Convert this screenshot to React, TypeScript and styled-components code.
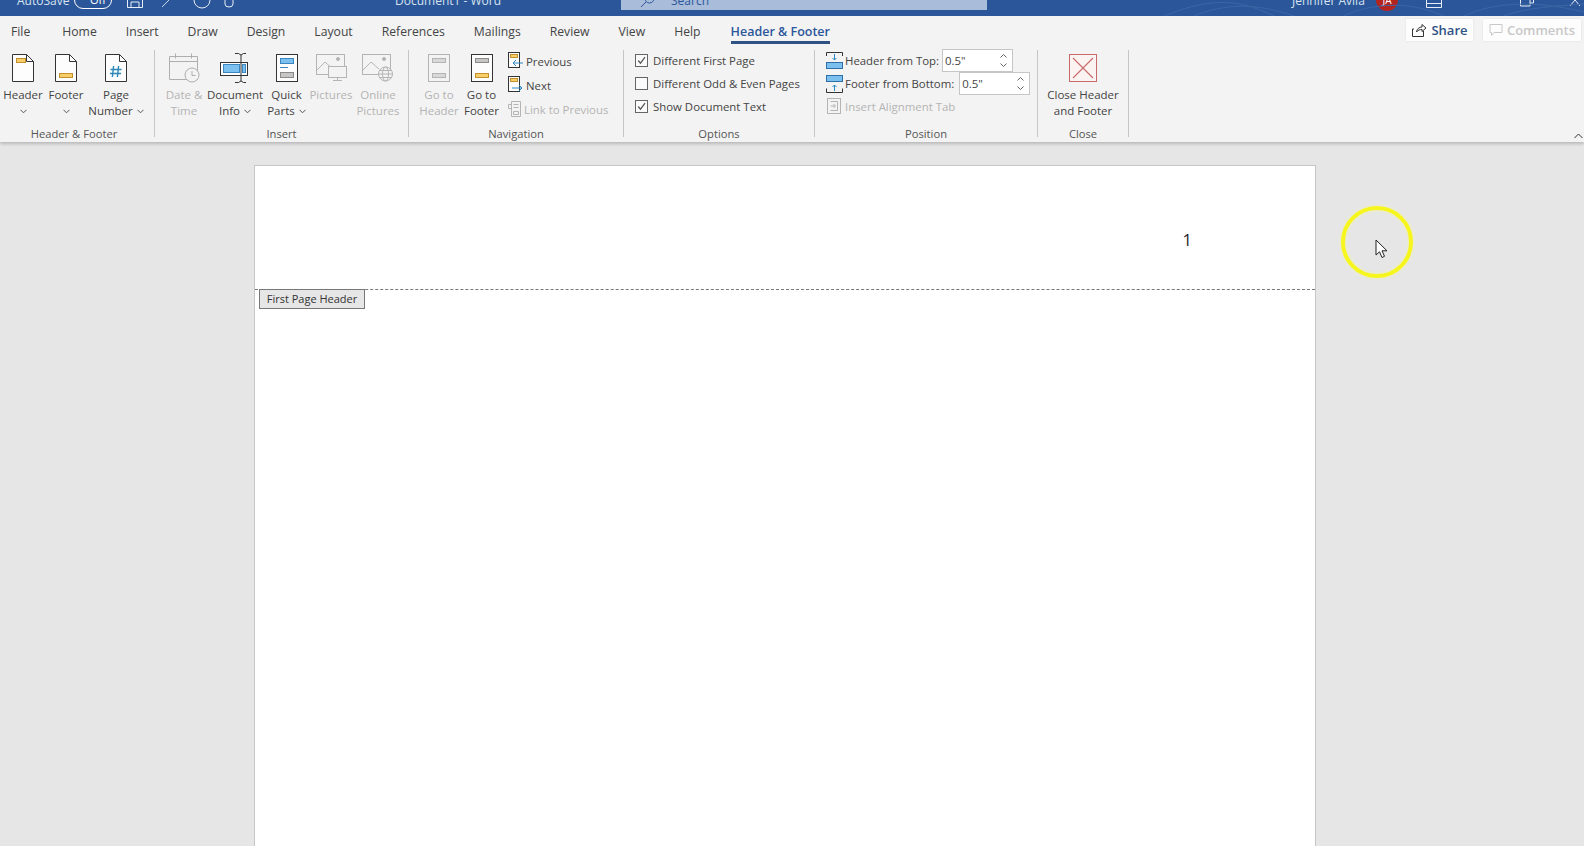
import React from "react";
import styled, { createGlobalStyle } from "styled-components";

const Global = createGlobalStyle`
  html, body { margin: 0; padding: 0; height: 100%; background: #e6e6e6; }
  body { font-family: "Open Sans", "Noto Sans", "Liberation Sans", sans-serif; overflow: hidden; }
  #root { height: 846px; }
  * { box-sizing: border-box; }
`;

const Shell = styled.div`
  position: relative;
  width: 1584px;
  height: 846px;
  overflow: hidden;
  display: flex;
  flex-direction: column;
  background: #e6e6e6;
`;

const TitleBar = styled.header`
  position: relative;
  height: 16px;
  flex: none;
  overflow: hidden;
  background: #2b579a;
`;
const TitleRow = styled.div`
  display: flex;
  align-items: center;
  height: 32px;
  margin-top: -16px;
  padding-left: 17px;
  color: #dfe7f3;
  font-size: 12px;
`;
const TitleText = styled.span<{ $ml?: number; $w: number }>`
  flex: none;
  width: ${(p) => p.$w}px;
  margin-left: ${(p) => p.$ml ?? 0}px;
  white-space: nowrap;
  color: #d8e2f0;
`;
const Slot = styled.span<{ $ml: number; $w: number }>`
  flex: none;
  display: flex;
  width: ${(p) => p.$w}px;
  margin-left: ${(p) => p.$ml}px;
`;
const Toggle = styled.span`
  flex: none;
  width: 38px;
  height: 18px;
  margin-left: 8px;
  border: 1.5px solid #fff;
  border-radius: 9px;
  color: #fff;
  font-size: 11px;
  line-height: 15px;
  text-align: right;
  padding-right: 5px;
`;
const SearchBox = styled.div`
  flex: none;
  width: 366px;
  height: 20px;
  margin-left: 118px;
  background: #a9bcd9;
  color: #2b579a;
  display: flex;
  align-items: center;
  padding-left: 19px;
  gap: 16px;
  font-size: 12px;
`;
const Avatar = styled.span`
  flex: none;
  width: 22px;
  height: 22px;
  margin-left: 13px;
  border-radius: 50%;
  background: #b5231f;
  color: #fff;
  font-size: 10px;
  line-height: 22px;
  text-align: center;
`;
const WaveArt = styled.svg`
  position: absolute;
  right: 0;
  top: 0;
`;

const TabRow = styled.nav`
  position: relative;
  z-index: 2;
  flex: none;
  height: 30px;
  display: flex;
  align-items: stretch;
  background: #f3f3f3;
  padding-left: 11px;
  gap: 29px;
`;
const Tab = styled.span<{ $active?: boolean; $extra?: number }>`
  position: relative;
  display: flex;
  align-items: center;
  margin-left: ${(p) => p.$extra ?? 0}px;
  font-size: ${(p) => (p.$active ? 12.5 : 12.2)}px;
  white-space: nowrap;
  color: ${(p) => (p.$active ? "#2b579a" : "#444")};
  font-weight: ${(p) => (p.$active ? 600 : 400)};
  &::after {
    content: "";
    display: ${(p) => (p.$active ? "block" : "none")};
    position: absolute;
    left: 0;
    right: 0;
    bottom: 2px;
    height: 3px;
    background: #2f5285;
  }
`;
const TabActions = styled.div`
  margin-left: auto;
  display: flex;
  align-items: center;
  gap: 10px;
  padding-right: 3px;
  padding-bottom: 2px;
`;
const ActionButton = styled.span<{ $w: number; $muted?: boolean }>`
  width: ${(p) => p.$w}px;
  height: 22px;
  display: flex;
  align-items: center;
  justify-content: center;
  gap: 4px;
  background: #fdfdfd;
  box-shadow: 0 0 2px #ddd;
  font-size: 13px;
  font-weight: 600;
  color: ${(p) => (p.$muted ? "#c8c8c8" : "#2f5285")};
`;

const Ribbon = styled.section`
  position: relative;
  flex: none;
  height: 96px;
  display: flex;
  background: #f3f3f3;
  box-shadow: 0 2px 3px rgba(0, 0, 0, 0.2);
  z-index: 1;
`;
const Group = styled.div<{ $w: number }>`
  flex: none;
  width: ${(p) => p.$w}px;
  display: flex;
  flex-direction: column;
`;
const GroupBody = styled.div<{ $pl?: number }>`
  flex: none;
  height: 80px;
  display: flex;
  padding-top: 4px;
  padding-left: ${(p) => p.$pl ?? 0}px;
`;
const GroupLabel = styled.div<{ $pr?: number }>`
  height: 16px;
  line-height: 16px;
  font-size: 11.2px;
  text-align: center;
  color: #555;
  padding-right: ${(p) => p.$pr ?? 0}px;
`;
const Divider = styled.div`
  flex: none;
  width: 1px;
  height: 87px;
  margin-top: 4px;
  background: #c6c6c6;
`;
const Large = styled.div<{ $w: number; $off?: boolean }>`
  flex: none;
  width: ${(p) => p.$w}px;
  display: flex;
  flex-direction: column;
  align-items: center;
  color: ${(p) => (p.$off ? "#b4b4b4" : "#444")};
  font-size: 11.5px;
  line-height: 16px;
  white-space: nowrap;
`;
const IconSlot = styled.div`
  height: 36px;
  margin-bottom: 1px;
  display: flex;
  align-items: center;
  justify-content: center;
`;
const LineRow = styled.div`
  height: 16px;
  display: flex;
  align-items: center;
  gap: 4px;
`;
const SmallCol = styled.div<{ $ml?: number }>`
  margin-left: ${(p) => p.$ml ?? 0}px;
  margin-top: -1px;
  display: flex;
  flex-direction: column;
`;
const SmallRow = styled.div<{ $off?: boolean; $h?: number }>`
  height: ${(p) => p.$h ?? 24}px;
  display: flex;
  align-items: center;
  gap: 2px;
  font-size: 11.4px;
  white-space: nowrap;
  color: ${(p) => (p.$off ? "#b4b4b4" : "#444")};
`;
const Check = styled.span`
  flex: none;
  width: 13px;
  height: 13px;
  margin-right: 3px;
  border: 1px solid #666;
  background: #fbfbfb;
  display: flex;
`;
const SpinInput = styled.div<{ $ml: number }>`
  flex: none;
  width: 71px;
  height: 23px;
  margin-left: ${(p) => p.$ml}px;
  display: flex;
  align-items: center;
  justify-content: space-between;
  border: 1px solid #c6c6c6;
  background: #fff;
  padding-left: 2px;
  color: #444;
`;
const SpinArrows = styled.span`
  width: 17px;
  display: flex;
  flex-direction: column;
  align-items: center;
  gap: 5px;
`;
const Collapse = styled.svg`
  position: absolute;
  right: 1px;
  bottom: 3px;
`;

const Workspace = styled.main`
  flex: 1;
  min-height: 0;
  padding: 23px 0 0 254px;
`;
const Page = styled.article`
  position: relative;
  width: 1062px;
  height: 700px;
  background: #fff;
  border: 1px solid #c6c6c6;
`;
const HeaderArea = styled.div`
  height: 124px;
  border-bottom: 1px dashed #777;
  padding: 63px 123px 0 0;
  text-align: right;
  font-size: 16.5px;
  line-height: 22px;
  color: #222;
`;
const HeaderTag = styled.span`
  position: absolute;
  left: 4px;
  top: 123px;
  width: 106px;
  height: 20px;
  border: 1px solid #777;
  background: #e6e6e6;
  color: #333;
  font-size: 11px;
  line-height: 18px;
  text-align: center;
  white-space: nowrap;
`;
const Spotlight = styled.div`
  position: absolute;
  left: 1341px;
  top: 206px;
  width: 72px;
  height: 72px;
  border: 4px solid #f6f61e;
  border-radius: 50%;
  box-shadow: 0 0 3px #f6f6a0, inset 0 0 3px #f6f6a0;
`;
const Pointer = styled.svg`
  position: absolute;
  left: 1375px;
  top: 239px;
`;

const Chev = () => (
  <svg width="7" height="5" viewBox="0 0 7 5"><path d="M.5 .8 3.5 3.8 6.5 .8" fill="none" stroke="#555" strokeWidth="1" /></svg>
);

const Doc = ({ children, c = "#333", fill = "#fdfdfd" }: { children?: React.ReactNode; c?: string; fill?: string }) => (
  <svg width="22" height="28" viewBox="0 0 22 28">
    <path d="M.5 .5H14.5L21.5 7.5V27.5H.5Z" fill={fill} stroke={c} />
    <path d="M14.5 .5V7.5H21.5" fill="none" stroke={c} />
    {children}
  </svg>
);
const Box = ({ x, y, w, h, f, s }: { x: number; y: number; w: number; h: number; f: string; s: string }) => (
  <rect x={x + 0.5} y={y + 0.5} width={w} height={h} fill={f} stroke={s} />
);
const Y = "#f6cf6b", YS = "#c58f2b", B = "#7cc0ef", BS = "#3a86c0", G = "#c8c6c4", GS = "#8a8a8a";

const HeaderIcon = () => <Doc><Box x={4} y={4} w={9} h={4} f={Y} s={YS} /></Doc>;
const FooterIcon = () => <Doc><Box x={4} y={19} w={13} h={4} f={Y} s={YS} /></Doc>;
const NumberIcon = () => (
  <Doc>
    <path d="M8.6 12 7.4 23M13.6 12 12.4 23M5.5 15.5H16.5M5 19.5H16" stroke="#2b88b8" strokeWidth="1.4" fill="none" />
  </Doc>
);
const DateIcon = () => (
  <svg width="32" height="30" viewBox="-1 0 32 30" fill="none" stroke="#aeaeae">
    <path d="M.5 3.5H28.5V26.5H.5ZM.5 8.5H28.5M6.5 .5V5.5M22.5 .5V5.5" />
    <circle cx="23" cy="22" r="7" fill="#f3f3f3" />
    <path d="M23 18V22.5H26.5" />
  </svg>
);
const DocInfoIcon = () => (
  <svg width="30" height="30" viewBox="0 0 30 30" fill="none" stroke="#333">
    <rect x=".5" y="9.5" width="27" height="13" fill="#fdfdfd" />
    <rect x="3.5" y="11.5" width="16" height="8" fill={B} stroke={BS} />
    <rect x="22.5" y="11.5" width="3" height="8" fill={B} stroke={BS} />
    <path d="M18 .5H21.5L24 2L26.500 .5H29M24 2V28M18 29.500H21.5L24 28L26.500 29.500H29" transform="translate(-3)" />
  </svg>
);
const QuickIcon = () => (
  <svg width="22" height="28" viewBox="0 0 22 28" fill="none">
    <rect x=".5" y=".5" width="21" height="27" fill="#fdfdfd" stroke="#333" />
    <Box x={4} y={4} w={13} h={5} f={B} s={BS} />
    <path d="M4 13.500H12" stroke="#3a86c0" />
    <Box x={4} y={18} w={13} h={5} f={G} s={GS} />
  </svg>
);
const PicturesIcon = () => (
  <svg width="32" height="30" viewBox="-1 0 32 30" fill="none" stroke="#b4b4b4">
    <rect x=".5" y="1.500" width="28" height="20" />
    <path d="M1 17 9 9 17 16" />
    <circle cx="22" cy="6" r="1.500" fill="#b4b4b4" />
    <rect x="12.500" y="13.500" width="18" height="11" fill="#f3f3f3" />
    <path d="M21.500 24.500V27M17 27.500H26" />
  </svg>
);
const OnlineIcon = () => (
  <svg width="32" height="30" viewBox="0 0 32 30" fill="none" stroke="#b4b4b4">
    <rect x=".5" y="1.500" width="28" height="20" />
    <path d="M1 17 9 9 17 16" />
    <circle cx="22" cy="6" r="1.500" fill="#b4b4b4" />
    <circle cx="23.500" cy="21" r="7" fill="#f3f3f3" />
    <ellipse cx="23.500" cy="21" rx="3" ry="7" />
    <path d="M16.500 21H30.500M17.500 17.500H29.500M17.500 24.500H29.500" />
  </svg>
);
const GotoIcon = ({ off, bottom }: { off?: boolean; bottom: "gray" | "yellow" }) => (
  <svg width="22" height="28" viewBox="0 0 22 28" fill="none">
    <rect x=".5" y=".5" width="21" height="27" fill={off ? "#f3f3f3" : "#fdfdfd"} stroke={off ? "#b4b4b4" : "#333"} />
    <Box x={4} y={4} w={13} h={4} f={off ? "#d8d8d8" : G} s={off ? "#b4b4b4" : GS} />
    <Box x={4} y={19} w={13} h={4} f={bottom === "yellow" ? Y : "#d8d8d8"} s={bottom === "yellow" ? YS : "#b4b4b4"} />
  </svg>
);
const NavIcon = ({ dir }: { dir: "prev" | "next" }) => (
  <svg width="16" height="18" viewBox="0 0 16 18" fill="none">
    <rect x=".5" y=".5" width="11" height="15" fill="#fdfdfd" stroke="#333" />
    <Box x={2} y={2} w={7} h={3} f={Y} s={YS} />
    {dir === "prev" ? (
      <path d="M15 11H5M8 8 5 11 8 14" stroke="#2b88c8" />
    ) : (
      <path d="M4 12H14M11 9 14 12 11 15" stroke="#2b88c8" />
    )}
  </svg>
);
const LinkIcon = () => (
  <svg width="14" height="17" viewBox="0 0 14 17" fill="none" stroke="#b4b4b4">
    <path d="M3.500 .5H12.500V15.500H3.500ZM.5 3.500H3.500M.5 7.500H3.500M.5 3.500V7.500M5.500 3.500H10.500M5.500 6.500H10.500M5.500 10.500H10.500V13.500H5.500Z" />
  </svg>
);
const CheckMark = () => (
  <svg width="11" height="11" viewBox="0 0 11 11"><path d="M2.200 5.500 4.500 8.200 9 2.200" fill="none" stroke="#555" strokeWidth="1.200" /></svg>
);
const FromTop = () => (
  <svg width="17" height="18" viewBox="0 0 17 18" fill="none">
    <path d="M.5 4V.5H16.500V4" stroke="#333" />
    <path d="M8.500 2V8M6.500 6 8.500 8 10.500 6" stroke="#2b88c8" />
    <rect x=".5" y="10.500" width="16" height="6" fill={B} stroke="#2f6fa8" />
  </svg>
);
const FromBottom = () => (
  <svg width="17" height="18" viewBox="0 0 17 18" fill="none">
    <rect x=".5" y=".5" width="16" height="6" fill={B} stroke="#2f6fa8" />
    <path d="M8.500 16V10M6.500 12 8.500 10 10.500 12" stroke="#2b88c8" />
    <path d="M.5 13.500V17.500H16.500V13.500" stroke="#333" />
  </svg>
);
const AlignIcon = () => (
  <svg width="17" height="17" viewBox="0 0 17 17" fill="none" stroke="#b4b4b4">
    <rect x="1.500" y=".5" width="13" height="15" />
    <path d="M4.500 3.500H11.500V12.500H4.500M4.500 8H9M7.500 6 9.500 8 7.500 10" />
  </svg>
);
const CloseIcon = () => (
  <svg width="28" height="28" viewBox="0 0 28 28" fill="none">
    <rect x=".5" y=".5" width="27" height="27" fill="#fbf3f2" stroke="#c9696a" />
    <path d="M4 4 24 24M24 4 4 24" stroke="#c9696a" strokeWidth="1.100" />
  </svg>
);
const SpinUp = () => <svg width="7" height="4" viewBox="0 0 7 4"><path d="M.5 3.500 3.500 .5 6.500 3.500" fill="none" stroke="#666" /></svg>;
const SpinDown = () => <svg width="7" height="4" viewBox="0 0 7 4"><path d="M.5 .5 3.500 3.500 6.500 .5" fill="none" stroke="#666" /></svg>;

const tabs = ["File", "Home", "Insert", "Draw", "Design", "Layout", "References", "Mailings", "Review", "View", "Help"];

export default function App() {
  return (
    <Shell>
      <Global />
      <TitleBar>
        <WaveArt width="420" height="16" viewBox="0 0 420 16" fill="none" stroke="#3b66a6">
          <path d="M0 16C40 0 70 -4 110 16M30 16C60 4 90 2 130 16M180 16C200 6 240 -2 280 16M300 16C330 2 370 0 420 12M340 16C360 8 390 6 420 4" />
        </WaveArt>
        <TitleRow>
          <TitleText $w={49}>AutoSave</TitleText>
          <Toggle>Off</Toggle>
          <Slot $ml={15} $w={16}>
            <svg width="16" height="16" viewBox="0 0 16 16" fill="none" stroke="#e8eef7"><path d="M.5 .5H15.500V15.500H.5ZM4 15V10H12V15" /></svg>
          </Slot>
          <Slot $ml={18} $w={12}>
            <svg width="12" height="16" viewBox="0 0 12 16" fill="none" stroke="#c9d6ea"><path d="M1 15 11 5" /></svg>
          </Slot>
          <Slot $ml={20} $w={18}>
            <svg width="18" height="18" viewBox="0 0 18 18" fill="none" stroke="#e8eef7"><circle cx="9" cy="9" r="8" /></svg>
          </Slot>
          <Slot $ml={13} $w={10}>
            <svg width="10" height="16" viewBox="0 0 10 16" fill="none" stroke="#e8eef7"><path d="M1 6V12Q1 15 5 15Q9 15 9 12V6" /></svg>
          </Slot>
          <Slot $ml={33} $w={4}>
            <svg width="4" height="8" viewBox="0 0 4 8"><circle cx="2" cy="2" r="1.500" fill="#e8eef7" /></svg>
          </Slot>
          <TitleText $ml={124} $w={108}>Document1 - Word</TitleText>
          <SearchBox>
            <svg width="15" height="15" viewBox="0 0 15 15" fill="none" stroke="#2b579a"><circle cx="9.500" cy="5.500" r="4.500" /><path d="M6 9 1 14" /></svg>
            <span>Search</span>
          </SearchBox>
          <TitleText $ml={305} $w={71}>Jennifer Avila</TitleText>
          <Avatar>JA</Avatar>
          <Slot $ml={28} $w={16}>
            <svg width="16" height="16" viewBox="0 0 16 16" fill="none" stroke="#e8eef7"><path d="M.5 .5H15.500V15.500H.5ZM.5 11.500H15.500" /></svg>
          </Slot>
          <Slot $ml={78} $w={14}>
            <svg width="14" height="16" viewBox="0 0 14 16" fill="none" stroke="#e8eef7"><path d="M3 .5H13.500V11H10M.5 4.500H10V14H.5Z" /></svg>
          </Slot>
          <Slot $ml={35} $w={12}>
            <svg width="12" height="16" viewBox="0 0 12 16" fill="none" stroke="#e8eef7"><path d="M1 2 11 14M11 2 1 14" /></svg>
          </Slot>
        </TitleRow>
      </TitleBar>

      <TabRow>
        {tabs.map((t, i) => <Tab key={t} $extra={i === 1 ? 3 : 0}>{t}</Tab>)}
        <Tab $active $extra={1}>Header &amp; Footer</Tab>
        <TabActions>
          <ActionButton $w={67}>
            <svg width="16" height="16" viewBox="0 0 16 16" fill="none" stroke="#333"><path d="M3 7H1.500V14.500H12.500V9M5.500 10C6 6.500 8.500 5 11 5V2.500L15 6 11 9.500V7.500C9 7.500 7 8 5.500 10Z" /></svg>
            Share
          </ActionButton>
          <ActionButton $w={98} $muted>
            <svg width="14" height="14" viewBox="0 0 14 14" fill="none" stroke="#c8c8c8"><path d="M1 1.500H13V9.500H5L2.500 12.500V9.500H1Z" /></svg>
            Comments
          </ActionButton>
        </TabActions>
      </TabRow>

      <Ribbon>
        <Group $w={154}>
          <GroupBody>
            <Large $w={46}><IconSlot><HeaderIcon /></IconSlot><LineRow>Header</LineRow><LineRow><Chev /></LineRow></Large>
            <Large $w={40}><IconSlot><FooterIcon /></IconSlot><LineRow>Footer</LineRow><LineRow><Chev /></LineRow></Large>
            <Large $w={60}><IconSlot><NumberIcon /></IconSlot><LineRow>Page</LineRow><LineRow>Number<Chev /></LineRow></Large>
          </GroupBody>
          <GroupLabel $pr={6}>Header &amp; Footer</GroupLabel>
        </Group>
        <Divider />
        <Group $w={253}>
          <GroupBody $pl={7}>
            <Large $w={44} $off><IconSlot><DateIcon /></IconSlot><LineRow>Date &amp;</LineRow><LineRow>Time</LineRow></Large>
            <Large $w={58}><IconSlot><DocInfoIcon /></IconSlot><LineRow>Document</LineRow><LineRow>Info<Chev /></LineRow></Large>
            <Large $w={45}><IconSlot><QuickIcon /></IconSlot><LineRow>Quick</LineRow><LineRow>Parts<Chev /></LineRow></Large>
            <Large $w={44} $off><IconSlot><PicturesIcon /></IconSlot><LineRow>Pictures</LineRow></Large>
            <Large $w={50} $off><IconSlot><OnlineIcon /></IconSlot><LineRow>Online</LineRow><LineRow>Pictures</LineRow></Large>
          </GroupBody>
          <GroupLabel>Insert</GroupLabel>
        </Group>
        <Divider />
        <Group $w={214}>
          <GroupBody $pl={8}>
            <Large $w={44} $off><IconSlot><GotoIcon off bottom="gray" /></IconSlot><LineRow>Go to</LineRow><LineRow>Header</LineRow></Large>
            <Large $w={41}><IconSlot><GotoIcon bottom="yellow" /></IconSlot><LineRow>Go to</LineRow><LineRow>Footer</LineRow></Large>
            <SmallCol $ml={6}>
              <SmallRow><NavIcon dir="prev" />Previous</SmallRow>
              <SmallRow><NavIcon dir="next" />Next</SmallRow>
              <SmallRow $off><LinkIcon />Link to Previous</SmallRow>
            </SmallCol>
          </GroupBody>
          <GroupLabel>Navigation</GroupLabel>
        </Group>
        <Divider />
        <Group $w={190}>
          <GroupBody $pl={11}>
            <SmallCol>
              <SmallRow $h={23}><Check><CheckMark /></Check>Different First Page</SmallRow>
              <SmallRow $h={23}><Check />Different Odd &amp; Even Pages</SmallRow>
              <SmallRow $h={23}><Check><CheckMark /></Check>Show Document Text</SmallRow>
            </SmallCol>
          </GroupBody>
          <GroupLabel>Options</GroupLabel>
        </Group>
        <Divider />
        <Group $w={222}>
          <GroupBody $pl={11}>
            <SmallCol>
              <SmallRow $h={23}><FromTop />Header from Top:<SpinInput $ml={1}>0.5"<SpinArrows><SpinUp /><SpinDown /></SpinArrows></SpinInput></SmallRow>
              <SmallRow $h={23}><FromBottom />Footer from Bottom:<SpinInput $ml={3}>0.5"<SpinArrows><SpinUp /><SpinDown /></SpinArrows></SpinInput></SmallRow>
              <SmallRow $h={23} $off><AlignIcon />Insert Alignment Tab</SmallRow>
            </SmallCol>
          </GroupBody>
          <GroupLabel>Position</GroupLabel>
        </Group>
        <Divider />
        <Group $w={90}>
          <GroupBody>
            <Large $w={90}><IconSlot><CloseIcon /></IconSlot><LineRow>Close Header</LineRow><LineRow>and Footer</LineRow></Large>
          </GroupBody>
          <GroupLabel>Close</GroupLabel>
        </Group>
        <Divider />
        <Collapse width="9" height="6" viewBox="0 0 9 6"><path d="M.5 5 4.500 1 8.500 5" fill="none" stroke="#333" /></Collapse>
      </Ribbon>

      <Workspace>
        <Page>
          <HeaderArea>1</HeaderArea>
          <HeaderTag>First Page Header</HeaderTag>
        </Page>
      </Workspace>

      <Spotlight />
      <Pointer width="14" height="20" viewBox="0 0 14 20">
        <path d="M1 1V16L4.500 12.800 7 18.500 9.500 17.300 7 11.800H12Z" fill="#fff" stroke="#222" />
      </Pointer>
    </Shell>
  );
}
